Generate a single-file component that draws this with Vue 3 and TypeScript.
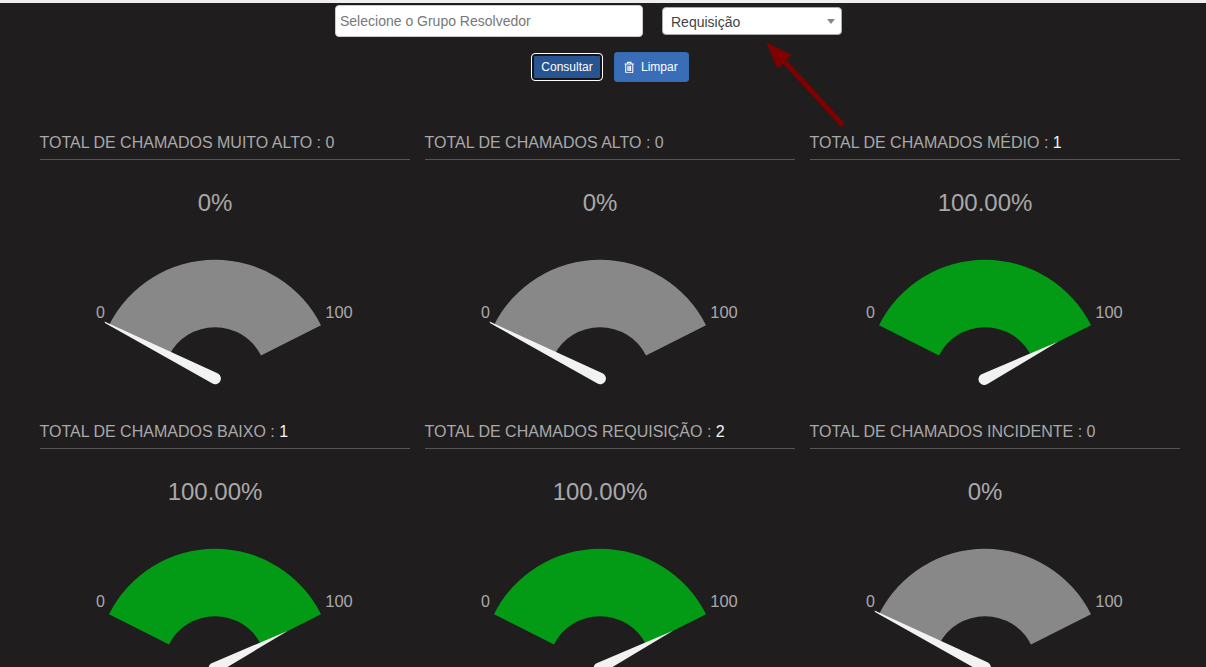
<script setup lang="ts">
interface Gauge { label: string; count: number; percent: string; active: boolean; }
const gauges: Gauge[] = [
  { label: 'TOTAL DE CHAMADOS MUITO ALTO', count: 0, percent: '0%', active: false },
  { label: 'TOTAL DE CHAMADOS ALTO', count: 0, percent: '0%', active: false },
  { label: 'TOTAL DE CHAMADOS MÉDIO', count: 1, percent: '100.00%', active: true },
  { label: 'TOTAL DE CHAMADOS BAIXO', count: 1, percent: '100.00%', active: true },
  { label: 'TOTAL DE CHAMADOS REQUISIÇÃO', count: 2, percent: '100.00%', active: true },
  { label: 'TOTAL DE CHAMADOS INCIDENTE', count: 0, percent: '0%', active: false },
];
</script>

<template>
  <div class="page">
    <div class="filters">
      <input class="group-input" type="text" placeholder="Selecione o Grupo Resolvedor" />
      <div class="select-box">
        <span class="select-text">Requisição</span>
        <i class="caret"></i>
      </div>
    </div>
    <div class="actions">
      <button class="btn btn-focus" type="button">Consultar</button>
      <button class="btn" type="button">
        <svg class="trash" viewBox="0 0 12 12" width="12.5" height="12.5">
          <path d="M1.5 2.8h9M4.3 2.6V1.3h3.4v1.3M2.6 3v7.4c0 .5.3.8.8.8h5.2c.5 0 .8-.3.8-.8V3M4.7 4.6v5M6 4.6v5M7.3 4.6v5" fill="none" stroke="currentColor" stroke-width="1" />
        </svg>
        Limpar
      </button>
    </div>
    <svg class="arrow" viewBox="0 0 80 90" width="80" height="90">
      <path d="M77 86.5 L19 23" stroke="#800000" stroke-width="5" fill="none" />
      <path d="M0.2 3.2 L25.7 16 L11.7 30 Z" fill="#800000" />
    </svg>

    <div class="grid">
      <section v-for="g in gauges" :key="g.label" class="card">
        <h5 class="title"><span class="title-text">{{ g.label }} : <span :class="{ bright: g.count > 0 }">{{ g.count }}</span></span></h5>
        <svg class="gauge" viewBox="0 0 370 240" width="370" height="240">
          <text class="pct" x="175" y="51" text-anchor="middle">{{ g.percent }}</text>
          <path
            d="M69 165.2 A118.5 118.5 0 0 1 281 165.2 L221 195.5 A51.5 51.5 0 0 0 129 195.5 Z"
            :fill="g.active ? '#039a15' : '#888888'"
          />
          <text class="lim" x="60.5" y="158" text-anchor="middle">0</text>
          <text class="lim lim-max" x="299" y="158" text-anchor="middle">100</text>
          <path
            :d="g.active
              ? 'M248 181.7 L171 214.5 A5.5 5.5 0 0 0 177.5 224 Z'
              : 'M64.5 161.5 L178 213.5 A5.5 5.5 0 0 1 172.5 223.5 L65 163 Z'"
            fill="#f2f2f2"
          />
        </svg>
      </section>
    </div>
  </div>
</template>

<style>
html, body { margin: 0; background: #1f1d1e; }
</style>

<style scoped>
.page {
  position: relative;
  box-sizing: border-box;
  height: 667px;
  overflow: hidden;
  background: #1f1d1e;
  border-top: 3px solid #efefef;
  font-family: "Liberation Sans", Arial, sans-serif;
}
.filters {
  display: flex;
  align-items: center;
  gap: 19px;
  margin: 2px 0 0 335px;
  height: 32px;
}
.group-input {
  box-sizing: border-box;
  width: 308px;
  height: 32px;
  padding: 0 4px;
  background: #fff;
  border: 1px solid #ccc;
  border-radius: 4px;
  font: 14px "Liberation Sans", Arial, sans-serif;
  color: #555;
}
.group-input::placeholder { color: #777; opacity: 1; }
.select-box {
  box-sizing: border-box;
  width: 180px;
  height: 28px;
  padding: 0 8px;
  display: flex;
  align-items: center;
  justify-content: space-between;
  background: #fff;
  border: 1px solid #aaa;
  border-radius: 4px;
  font-size: 14px;
  color: #444;
}
.select-text { padding-top: 1px; }
.caret {
  width: 0;
  height: 0;
  margin-right: -2px;
  border-left: 4px solid transparent;
  border-right: 4px solid transparent;
  border-top: 5px solid #888;
}
.actions {
  display: flex;
  gap: 11px;
  margin: 15px 0 0 531px;
  height: 30px;
}
.btn {
  box-sizing: border-box;
  width: 75px;
  height: 30px;
  padding: 0 0 0 8px;
  display: inline-flex;
  align-items: center;
  gap: 5.5px;
  background: #3a6db8;
  border: 1px solid #366aaf;
  border-radius: 3px;
  color: #fff;
  font: 12px "Liberation Sans", Arial, sans-serif;
}
.btn-focus {
  width: 72px;
  height: 28px;
  margin-top: 1px;
  padding: 0;
  justify-content: center;
  background: #285492;
  border: 1px solid #fff;
  border-radius: 4px;
  box-shadow: inset 0 0 0 2px #14151a;
}
.trash { display: block; flex: none; }
.arrow {
  position: absolute;
  left: 766px;
  top: 36px;
}
.grid {
  display: grid;
  grid-template-columns: repeat(3, 370px);
  column-gap: 15px;
  margin: 52px 0 0 40px;
}
.card { height: 289px; }
.title {
  box-sizing: border-box;
  margin: 0;
  height: 26px;
  border-bottom: 1px solid #555;
  color: #a9a9a9;
  font-size: 16px;
  font-weight: 400;
  line-height: 18px;
}
.title-text { margin-left: -0.5px; }
.bright { color: #f4f4f4; }
.gauge { display: block; overflow: visible; }
.pct { fill: #a9a9a9; font-size: 24px; }
.lim { fill: #a9a9a9; font-size: 16px; }
.lim-max { font-size: 16.5px; }
</style>
